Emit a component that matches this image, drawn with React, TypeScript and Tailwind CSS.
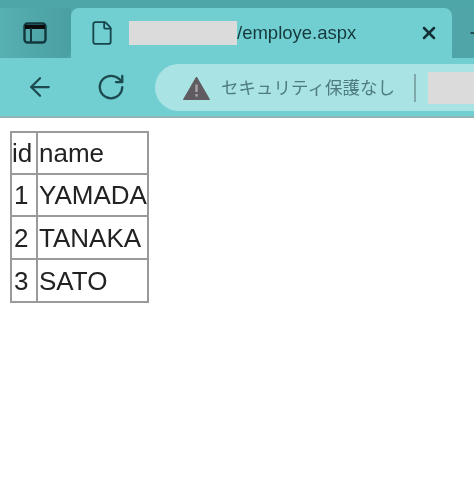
import { ArrowLeft, File, Plus, RotateCw, X } from "lucide-react";

const rows = [
  { id: "1", name: "YAMADA", height: "h-[42px]" },
  { id: "2", name: "TANAKA", height: "h-[43px]" },
  { id: "3", name: "SATO", height: "h-[43px]" },
];

export default function App() {
  return (
    <div className="h-[495px] w-[474px] overflow-hidden bg-white font-['Liberation_Sans',sans-serif]">
      {/* Browser chrome */}
      <div className="blur-[0.6px]">
        <div className="flex h-[58px] bg-[#4fa6a8] pt-[8px]">
          <div className="flex w-[71px] items-start justify-center rounded-br-[8px] bg-linear-to-r from-[#57b0b2] to-[#4a9fa1] pt-[14px]">
            <svg className="mr-[2px]" width="24" height="22" viewBox="0 0 24 22" fill="none">
              <rect x="1.5" y="1.5" width="21" height="19" rx="3" stroke="#12383e" strokeWidth="2.4" />
              <path d="M2 5h20" stroke="#0c0c0c" strokeWidth="4" />
              <path d="M8 6v14" stroke="#12383e" strokeWidth="2" />
            </svg>
          </div>
          <div className="flex h-[50px] w-[381px] items-center rounded-t-[8px] bg-[#71cfd1]">
            <File className="ml-[18px] h-[26px] w-[26px] text-[#17474d]" strokeWidth={1.7} />
            <div className="ml-[14px] h-[24px] w-[108px] bg-[#dbdbdb]" />
            <span className="text-[18.5px] text-[#16393d]">/employe.aspx</span>
            <X className="ml-auto mr-[13px] h-[20px] w-[20px] text-[#123035]" strokeWidth={3} />
          </div>
          <div className="flex h-[50px] flex-1 items-center justify-start overflow-hidden rounded-bl-[8px] bg-[#4fa5a7] pl-[15px]">
            <Plus className="h-[20px] w-[20px] shrink-0 text-[#123035]" strokeWidth={2} />
          </div>
        </div>
        <div className="flex h-[60px] items-start border-b-[2px] border-[#8fb5b6] bg-[#71cfd1] pt-[6px]">
          <div className="flex h-[46px] w-[155px] shrink-0 items-center">
            <ArrowLeft className="ml-[25px] h-[30px] w-[30px] text-[#1c4a50]" strokeWidth={1.8} />
            <RotateCw className="ml-[41px] h-[30px] w-[30px] text-[#1c4a50]" strokeWidth={1.8} />
          </div>
          <div className="flex h-[47px] flex-1 items-center rounded-l-[24px] bg-[#a9e3e4]">
            <svg className="ml-[28px] shrink-0" width="27" height="24" viewBox="0 0 27 24">
              <path d="M13.5 1 26.5 23.5H.5Z" fill="#5f5b60" stroke="#5f5b60" strokeWidth="1" strokeLinejoin="round" />
              <path d="M13.5 8.5v7.5" stroke="#a9a4a8" strokeWidth="2.4" />
              <path d="M13.5 18v2.6" stroke="#a9a4a8" strokeWidth="2.4" />
            </svg>
            <span className="ml-[11px] whitespace-nowrap font-['Noto_Sans_CJK_JP',sans-serif] text-[17.5px] text-[#4f7c80]">
              セキュリティ保護なし
            </span>
            <div className="ml-[19px] h-[28px] w-[2px] bg-[#7fa9ab]" />
            <div className="ml-[12px] h-[32px] flex-1 bg-[#dbdbdb]" />
          </div>
        </div>
      </div>

      {/* Page content */}
      <div className="pl-[10px] pt-[13px] blur-[0.4px]">
        <table className="border-separate border-spacing-0 border-2 border-[#9a9a9a] text-[26px] leading-[40px] text-[#222]">
          <tbody>
            <tr>
              <td className="h-[40px] w-[26px] border-r-2 border-[#9a9a9a] text-left">id</td>
              <td className="h-[40px] w-[108px] pl-[1px]">name</td>
            </tr>
            {rows.map((row) => (
              <tr key={row.id} className={row.height}>
                <td className="border-r-2 border-t-2 border-[#9a9a9a] pl-[2px] text-left">{row.id}</td>
                <td className="border-t-2 border-[#9a9a9a] pl-[1px] whitespace-nowrap">{row.name}</td>
              </tr>
            ))}
          </tbody>
        </table>
      </div>
    </div>
  );
}
